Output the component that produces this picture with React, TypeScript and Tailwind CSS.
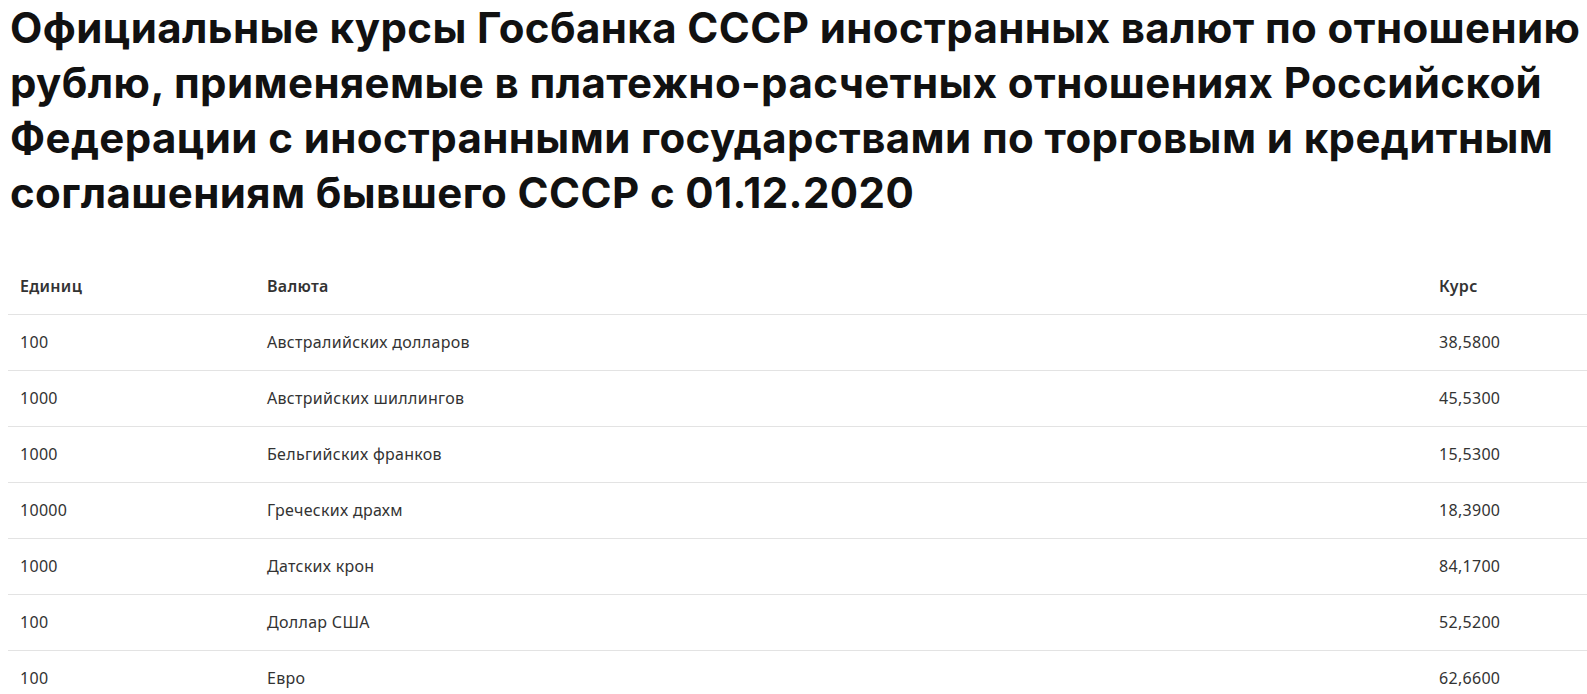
const rows = [
  { units: "100", name: "Австралийских долларов", rate: "38,5800" },
  { units: "1000", name: "Австрийских шиллингов", rate: "45,5300" },
  { units: "1000", name: "Бельгийских франков", rate: "15,5300" },
  { units: "10000", name: "Греческих драхм", rate: "18,3900" },
  { units: "1000", name: "Датских крон", rate: "84,1700" },
  { units: "100", name: "Доллар США", rate: "52,5200" },
  { units: "100", name: "Евро", rate: "62,6600" },
];

export default function App() {
  return (
    <div className="h-screen w-full overflow-hidden bg-white pl-[8px] text-[#222]">
      <h1 className="pl-[2px] font-['Inter',sans-serif] text-[42px] font-bold leading-[55px] tracking-[0.4px] text-[#111]">
        Официальные курсы Госбанка СССР иностранных валют по отношению рублю,
        применяемые в платежно-расчетных отношениях Российской Федерации с
        иностранными государствами по торговым и кредитным соглашениям
        бывшего СССР с 01.12.2020
      </h1>

      <table className="mt-[38px] w-full table-fixed border-collapse font-['Noto_Sans',sans-serif] text-[16px] tracking-[0.3px] text-[#333]">
        <thead>
          <tr className="h-[56px] border-b border-[#e3e3e3]">
            <th className="w-[247px] px-[12px] text-left font-semibold">Единиц</th>
            <th className="px-[12px] text-left font-semibold">Валюта</th>
            <th className="w-[160px] px-[12px] text-left font-semibold">Курс</th>
          </tr>
        </thead>
        <tbody>
          {rows.map((r, i) => (
            <tr key={i} className="h-[56px] border-b border-[#e3e3e3]">
              <td className="px-[12px]">{r.units}</td>
              <td className="px-[12px]">{r.name}</td>
              <td className="px-[12px]">{r.rate}</td>
            </tr>
          ))}
        </tbody>
      </table>
    </div>
  );
}
